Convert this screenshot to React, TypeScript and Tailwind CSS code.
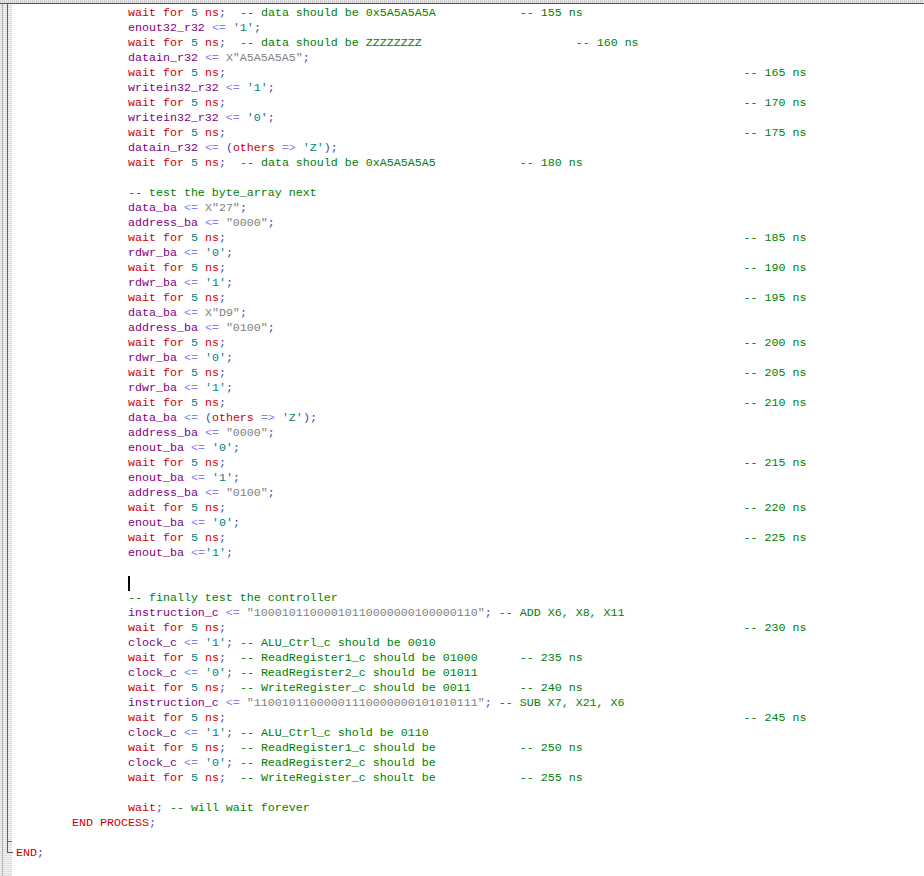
import React from "react";

function row(code: string, col?: number, cm?: string): string {
  let s = " ".repeat(16) + code;
  if (col !== undefined && cm) s = s.padEnd(col, " ") + cm;
  return s;
}
const wait = "wait for 5 ns;";
const lines: string[] = [
  row("wait for 5 ns;  -- data should be 0x5A5A5A5A", 72, "-- 155 ns"),
  row("enout32_r32 <= '1';"),
  row("wait for 5 ns;  -- data should be ZZZZZZZZ", 80, "-- 160 ns"),
  row('datain_r32 <= X"A5A5A5A5";'),
  row(wait, 104, "-- 165 ns"),
  row("writein32_r32 <= '1';"),
  row(wait, 104, "-- 170 ns"),
  row("writein32_r32 <= '0';"),
  row(wait, 104, "-- 175 ns"),
  row("datain_r32 <= (others => 'Z');"),
  row("wait for 5 ns;  -- data should be 0xA5A5A5A5", 72, "-- 180 ns"),
  "",
  row("-- test the byte_array next"),
  row('data_ba <= X"27";'),
  row('address_ba <= "0000";'),
  row(wait, 104, "-- 185 ns"),
  row("rdwr_ba <= '0';"),
  row(wait, 104, "-- 190 ns"),
  row("rdwr_ba <= '1';"),
  row(wait, 104, "-- 195 ns"),
  row('data_ba <= X"D9";'),
  row('address_ba <= "0100";'),
  row(wait, 104, "-- 200 ns"),
  row("rdwr_ba <= '0';"),
  row(wait, 104, "-- 205 ns"),
  row("rdwr_ba <= '1';"),
  row(wait, 104, "-- 210 ns"),
  row("data_ba <= (others => 'Z');"),
  row('address_ba <= "0000";'),
  row("enout_ba <= '0';"),
  row(wait, 104, "-- 215 ns"),
  row("enout_ba <= '1';"),
  row('address_ba <= "0100";'),
  row(wait, 104, "-- 220 ns"),
  row("enout_ba <= '0';"),
  row(wait, 104, "-- 225 ns"),
  row("enout_ba <='1';"),
  "",
  "CURSOR",
  row("-- finally test the controller"),
  row('instruction_c <= "10001011000010110000000100000110"; -- ADD X6, X8, X11'),
  row(wait, 104, "-- 230 ns"),
  row("clock_c <= '1'; -- ALU_Ctrl_c should be 0010"),
  row("wait for 5 ns;  -- ReadRegister1_c should be 01000", 72, "-- 235 ns"),
  row("clock_c <= '0'; -- ReadRegister2_c should be 01011"),
  row("wait for 5 ns;  -- WriteRegister_c should be 0011", 72, "-- 240 ns"),
  row('instruction_c <= "11001011000001110000000101010111"; -- SUB X7, X21, X6'),
  row(wait, 104, "-- 245 ns"),
  row("clock_c <= '1'; -- ALU_Ctrl_c shold be 0110"),
  row("wait for 5 ns;  -- ReadRegister1_c should be", 72, "-- 250 ns"),
  row("clock_c <= '0'; -- ReadRegister2_c should be"),
  row("wait for 5 ns;  -- WriteRegister_c shoult be", 72, "-- 255 ns"),
  "",
  row("wait; -- will wait forever"),
  "        END PROCESS;",
  "",
  "END;",
];

const re = /(--.*$)|(X?"[^"]*")|('.')|(<=|=>)|([;(),])|(\b(?:wait|for|ns|others|END|PROCESS)\b)|(\b\d+\b)|([A-Za-z_][A-Za-z0-9_]*)|(\s+)|(.)/g;

function highlight(s: string) {
  const out: React.ReactNode[] = [];
  let m: RegExpExecArray | null;
  let i = 0;
  re.lastIndex = 0;
  while ((m = re.exec(s))) {
    const t = m[0];
    let cls = "";
    if (m[1]) cls = "text-[#008000]";
    else if (m[2]) cls = "text-[#808080]";
    else if (m[3]) cls = "text-[#008080]";
    else if (m[4]) cls = "text-[#8080ff]";
    else if (m[5]) cls = "text-[#4040c0]";
    else if (m[6]) cls = "text-[#cc0000]";
    else if (m[7]) cls = "text-[#008080]";
    else if (m[8]) cls = "text-[#800080]";
    out.push(cls ? <span key={i++} className={cls}>{t}</span> : t);
    if (t.length === 0) re.lastIndex++;
  }
  return out;
}

export default function App() {
  return (
    <div className="w-[924px] h-[876px] bg-white overflow-hidden">
      <div className="h-[3px] bg-[repeating-linear-gradient(90deg,#c8c8c8_0,#c8c8c8_1px,#eeeeee_1px,#eeeeee_2px)]" />
      <div className="h-[1px] bg-[#5a5060]" />
      <div className="flex">
        <div className="relative w-[12px] h-[872px] shrink-0 bg-[repeating-linear-gradient(0deg,#dcdcdc_0,#dcdcdc_1px,#f4f4f4_1px,#f4f4f4_2px)]">
          <div className="absolute left-[2px] top-0 h-[872px] w-px bg-[#b0b0b0]" />
          <div className="absolute left-[7px] top-0 h-[849px] w-px bg-[#606060]" />
          <div className="absolute left-[7px] top-[837px] h-px w-[5px] bg-[#606060]" />
          <div className="absolute left-[7px] top-[848px] h-px w-[6px] bg-[#606060]" />
        </div>
        <div className="pt-[2px] pl-[4px] font-[family-name:Liberation_Mono] text-[11.67px] leading-[15px] whitespace-pre text-black">
          {lines.map((l, k) =>
            l === "CURSOR" ? (
              <div key={k} className="h-[15px] flex items-center">
                <span className="inline-block ml-[112px] w-[2px] h-[15px] bg-black" />
              </div>
            ) : (
              <div key={k} className="h-[15px]">{l ? highlight(l) : " "}</div>
            )
          )}
        </div>
      </div>
    </div>
  );
}
